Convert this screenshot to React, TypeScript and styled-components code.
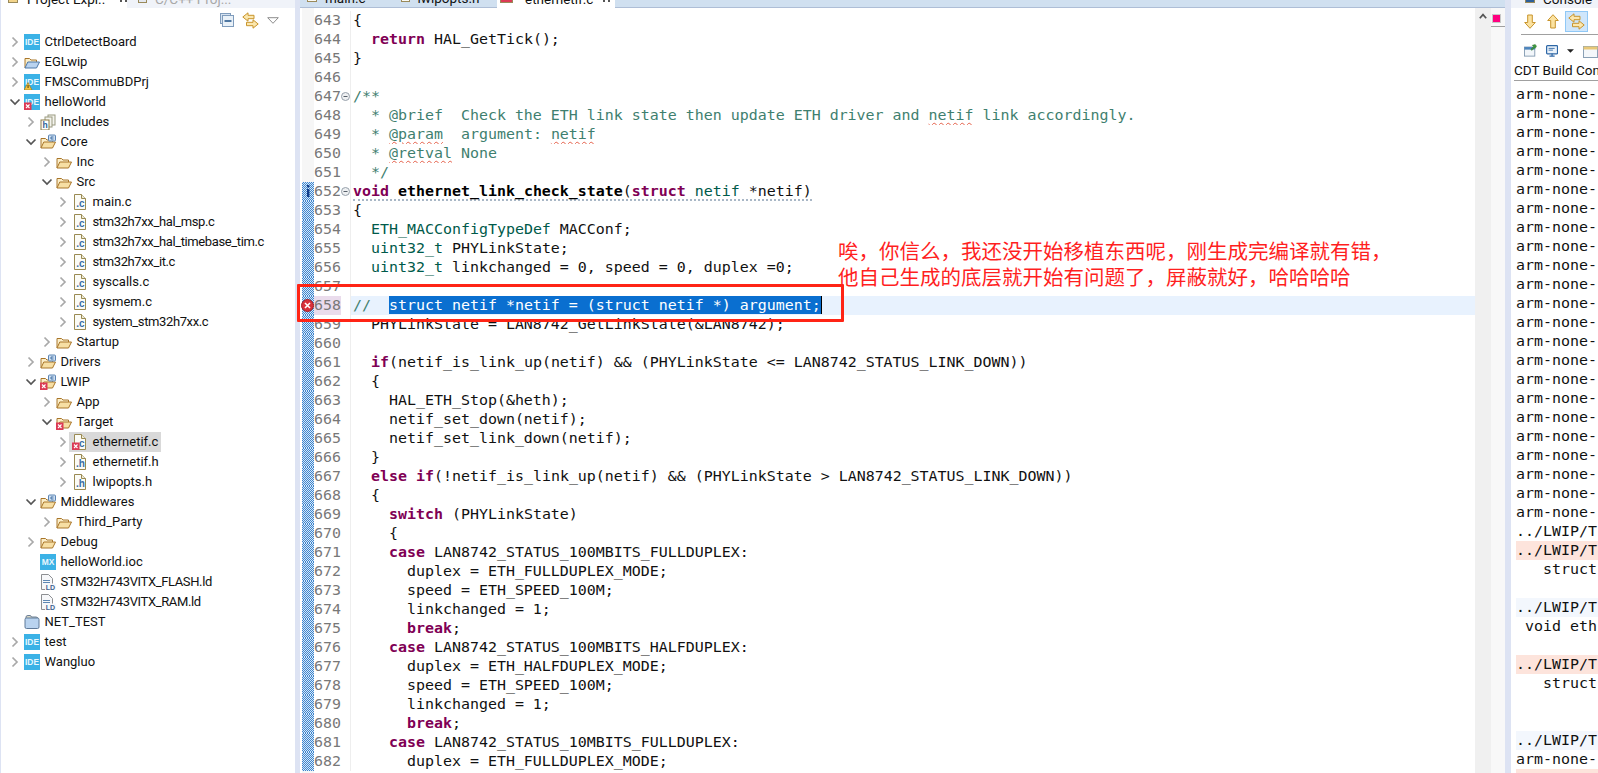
import React from "react";
import styled, { createGlobalStyle, css } from "styled-components";

const UI_FONT = `Roboto, "Noto Sans", sans-serif`;
const MONO_FONT = `"DejaVu Sans Mono", "Liberation Mono", monospace`;
const SASH = "#dde3f3";

const GlobalStyle = createGlobalStyle`
  html, body {
    margin: 0;
    padding: 0;
    width: 100%;
    height: 100%;
    overflow: hidden;
    background: #fff;
  }
  #root {
    height: 100%;
  }
`;

const Root = styled.div`
  position: relative;
  display: flex;
  width: 1598px;
  height: 773px;
  overflow: hidden;
  background: #fff;
`;

const Sash = styled.div<{ $w: number }>`
  flex: 0 0 ${(p) => p.$w}px;
  background: ${SASH};
`;

/* ---------- tab strips ---------- */

const TabStrip = styled.div<{ $bg: string }>`
  flex: 0 0 8px;
  height: 8px;
  display: flex;
  overflow: hidden;
  background: ${(p) => p.$bg};
`;

const Tab = styled.div<{ $w: number; $bg?: string; $pad?: number; $gap?: number; $line?: boolean }>`
  flex: 0 0 ${(p) => p.$w}px;
  height: 8px;
  box-sizing: border-box;
  display: flex;
  align-items: flex-end;
  gap: ${(p) => p.$gap ?? 8}px;
  padding-left: ${(p) => p.$pad ?? 7}px;
  overflow: hidden;
  background: ${(p) => p.$bg ?? "transparent"};
  ${(p) => p.$line && "border-bottom: 1px solid #aebed6;"}
`;

const TabText = styled.span<{ $dim?: boolean }>`
  font: 13.5px/14px ${UI_FONT};
  color: ${(p) => (p.$dim ? "#a8a8a8" : "#111")};
  white-space: nowrap;
  margin-bottom: 2px;
  flex: none;
`;

const TabGlyph = styled.span<{ $tone: string; $w: number; $push?: number }>`
  flex: none;
  width: ${(p) => p.$w}px;
  height: 3px;
  margin-bottom: 5px;
  margin-left: ${(p) => p.$push ?? 0}px;
  box-sizing: border-box;
  background: ${(p) => p.$tone};
  border: 1px solid #9a8a5a;
  border-top: none;
`;

const CloseMark = styled.span<{ $push: number }>`
  flex: none;
  width: 8px;
  height: 2px;
  margin: 0 0 6px ${(p) => p.$push}px;
  background: repeating-linear-gradient(90deg, #555 0 2px, transparent 2px 5px);
`;

/* ---------- project explorer ---------- */

const Explorer = styled.aside`
  flex: 0 0 295px;
  display: flex;
  flex-direction: column;
  box-sizing: border-box;
  border-left: 1px solid ${SASH};
`;

const ExplorerBar = styled.div`
  flex: 0 0 24px;
  display: flex;
  align-items: center;
  padding-left: 219px;
  gap: 8px;
`;

const Tree = styled.ul`
  list-style: none;
  margin: 0;
  padding: 0;
`;

const TreeRow = styled.li<{ $depth: number }>`
  height: 20px;
  display: flex;
  align-items: center;
  padding-left: ${(p) => 5.5 + p.$depth * 16}px;
`;

const ChevronSlot = styled.span`
  flex: 0 0 16px;
  height: 16px;
  display: flex;
  align-items: center;
  justify-content: center;
`;

const IconSlot = styled.span<{ $selected?: boolean }>`
  flex: 0 0 17px;
  height: 20px;
  padding-left: 1px;
  box-sizing: border-box;
  display: flex;
  align-items: center;
  ${(p) => p.$selected && "background: #d9d9d9; box-shadow: -2px 0 0 #d9d9d9;"}
`;

const TreeLabel = styled.span<{ $selected?: boolean; $tight?: boolean }>`
  padding: 0 4px 0 5px;
  font: 13px/20px ${UI_FONT};
  color: #111;
  white-space: nowrap;
  ${(p) => p.$tight && "letter-spacing: -0.38px;"}
  ${(p) => p.$selected && "background: #d9d9d9; padding-right: 3px;"}
`;

/* ---------- editor ---------- */

const Editor = styled.main`
  flex: 1 1 0;
  min-width: 0;
  display: flex;
  flex-direction: column;
`;

const EditorBody = styled.div`
  flex: 1 1 0;
  min-height: 0;
  display: flex;
`;

const Lines = styled.div`
  flex: 1 1 0;
  min-width: 0;
  padding: 3px 0 0 2px;
  overflow: hidden;
  background: linear-gradient(#f6f6f6, #f6f6f6) 2px 0 / 12px 100% no-repeat;
`;

const LineRow = styled.div`
  height: 19px;
  display: grid;
  grid-template-columns: 12px 27px 10px 1fr;
  font: 14.95px/19px ${MONO_FONT};
`;

const Marker = styled.div<{ $changed?: boolean }>`
  position: relative;
  height: 19px;
  ${(p) =>
    p.$changed &&
    css`
      background: repeating-conic-gradient(#3d86cc 0 25%, #d8e8fa 0 50%) 0 0 / 2px 2px;
    `}
`;

const LineNo = styled.div<{ $error?: boolean }>`
  color: #787878;
  text-align: right;
  padding-right: 1px;
  background: ${(p) => (p.$error ? "#eadcec" : "#fff")};
`;

const Fold = styled.div`
  display: flex;
  align-items: center;
  background: #fff;
`;

const Code = styled.div<{ $current?: boolean }>`
  padding-left: 2px;
  margin-left: -1px;
  border-left: 1px solid #eeeeee;
  white-space: pre;
  overflow: hidden;
  color: #111;
  background: ${(p) => (p.$current ? "#e8f2fe" : "transparent")};
`;

type TokenKind = "kw" | "cm" | "type" | "fn" | "sel";

const Token = styled.span<{ $kind?: TokenKind; $wavy?: boolean }>`
  ${(p) => p.$kind === "kw" && "color: #7f0055; font-weight: 700;"}
  ${(p) => p.$kind === "cm" && "color: #3f7f6f;"}
  ${(p) => p.$kind === "type" && "color: #005a4a;"}
  ${(p) => p.$kind === "fn" && "color: #000; font-weight: 700;"}
  ${(p) => p.$kind === "sel" && "color: #fff; background: #0a6fd0; box-shadow: 1px 0 0 #000;"}
  ${(p) =>
    p.$wavy &&
    css`
      text-decoration: underline wavy #e5604a 1px;
      text-underline-offset: 2px;
    `}
`;

const InfoLine = styled.span`
  display: inline-block;
  height: 19px;
  border-bottom: 2px dotted #a9b7c6;
  box-sizing: border-box;
`;

const Scrollbar = styled.div`
  flex: 0 0 16px;
  background: #f0f0f0;
  display: flex;
  justify-content: center;
  padding-top: 5px;
  box-sizing: border-box;
`;

const Overview = styled.div`
  flex: 0 0 14px;
  background: #f8f8f8;
  box-sizing: border-box;
  padding: 7px 0 0 2px;
`;

const OverviewMark = styled.div`
  width: 7px;
  height: 7px;
  background: #ff0080;
  box-shadow: 0 0 0 1px #c8c8c8;
  margin-bottom: 4px;
`;

const OverviewRule = styled.div`
  height: 1px;
  margin-left: -2px;
  background: #a0a0a0;
`;

/* ---------- annotations lying over the editor ---------- */

const RedBox = styled.div`
  position: absolute;
  left: 297px;
  top: 284px;
  width: 547px;
  height: 38px;
  box-sizing: border-box;
  border: 3px solid #ff2415;
  border-radius: 1px;
`;

const Note = styled.div`
  position: absolute;
  left: 838px;
  top: 237px;
  font: 20.5px/26px "Noto Sans CJK SC", sans-serif;
  color: #ff1f1f;
  white-space: nowrap;
`;

/* ---------- console ---------- */

const ConsolePane = styled.aside`
  flex: 0 0 87px;
  min-width: 0;
  display: flex;
  flex-direction: column;
  overflow: hidden;
`;

const ConsoleBar = styled.div`
  flex: 0 0 27px;
  box-sizing: border-box;
  margin-left: 10px;
  border-bottom: 1px solid #a0a0a0;
  display: flex;
  align-items: center;
  padding-left: 3px;
  gap: 11px;
`;

const HotButton = styled.div`
  flex: 0 0 23px;
  height: 21px;
  margin-left: -5px;
  box-sizing: border-box;
  background: #cfe6fb;
  border: 1px solid #90c8f6;
  display: flex;
  align-items: center;
  justify-content: center;
`;

const ConsoleTools = styled.div`
  flex: 0 0 27px;
  box-sizing: border-box;
  display: flex;
  align-items: center;
  padding: 4px 0 0 13px;
  gap: 9px;
  overflow: hidden;
`;

const ConsoleTitle = styled.div`
  flex: 0 0 18px;
  box-sizing: content-box;
  margin-left: 3px;
  font: 13.5px/17px ${UI_FONT};
  color: #111;
  white-space: nowrap;
  border-bottom: 1px solid #a0a0a0;
`;

const ConsoleOut = styled.div`
  padding: 4px 0 0 5px;
`;

const ConsoleLine = styled.div<{ $tone?: "err" | "info" }>`
  height: 19px;
  font: 14.95px/19px ${MONO_FONT};
  color: #111;
  white-space: pre;
  background: ${(p) => (p.$tone === "err" ? "#fde4dc" : p.$tone === "info" ? "#f3f7fd" : "transparent")};
`;

/* ---------- icons ---------- */

const ICON_TEXT = "Liberation Sans, sans-serif";

const Chevron = ({ open }: { open?: boolean }) => (
  <svg width="12" height="12" viewBox="0 0 12 12" fill="none">
    {open ? (
      <polyline points="1.5,3.5 6,8 10.5,3.5" stroke="#555" strokeWidth="1.7" />
    ) : (
      <polyline points="3.5,1.5 8,6 3.5,10.5" stroke="#a9a9a9" strokeWidth="1.7" />
    )}
  </svg>
);

type BadgeKind = "error" | "warn";

const Badge = ({ kind }: { kind?: BadgeKind }) => {
  if (kind === "error")
    return (
      <g>
        <rect x="0" y="8.5" width="7.5" height="7.5" fill="#dc3a55" />
        <path d="M2 10.5 L5.5 14 M5.5 10.5 L2 14" stroke="#fff" strokeWidth="1.1" />
      </g>
    );
  if (kind === "warn")
    return (
      <g>
        <polygon points="4,8.5 8,16 0,16" fill="#f4c542" stroke="#8f6d10" strokeWidth="0.6" />
        <rect x="3.6" y="11" width="0.9" height="3" fill="#3a2c00" />
      </g>
    );
  return null;
};

const BrandIcon = ({ label, badge }: { label: string; badge?: BadgeKind }) => (
  <svg width="16" height="16" viewBox="0 0 16 16">
    <rect width="16" height="16" fill="#3bb2e6" />
    <text x="8" y="11.2" textAnchor="middle" fontFamily={ICON_TEXT} fontWeight="700" fontSize="8.4" fill="#e9f7fd">
      {label}
    </text>
    <Badge kind={badge} />
  </svg>
);

const FolderIcon = ({ src, badge, front = "#f7dfa4" }: { src?: boolean; badge?: BadgeKind; front?: string }) => (
  <svg width="16" height="16" viewBox="0 0 16 16">
    <path d="M1 14 V4.5 H5.5 L7 6 H12.5 V8" fill="#fbeec9" stroke="#a9762a" />
    <path d="M1 14 L3.8 8 H15.5 L12.5 14 Z" fill={front} stroke="#a9762a" />
    {src && (
      <g>
        <rect x="8.5" y="1" width="7" height="6" rx="1" fill="#cfe0f2" stroke="#5b84b3" />
        <path d="M13.5 3 H11 V5 H13.5" fill="none" stroke="#3f6ea3" />
      </g>
    )}
    <Badge kind={badge} />
  </svg>
);

const ProjectFolderIcon = () => (
  <svg width="16" height="16" viewBox="0 0 16 16">
    <path d="M2 5 V3 Q2 1.5 4 1.5 H6 Q7 1.5 7.5 3 H12 Q14 3 14 5" fill="#d8d8c8" stroke="#6d7f95" />
    <rect x="1" y="4" width="14" height="10.5" rx="1.5" fill="#b9d3ef" stroke="#5f7a99" />
  </svg>
);

const ArchiveOpenIcon = () => (
  <svg width="16" height="16" viewBox="0 0 16 16">
    <path d="M1 14 V4.5 H5.5 L7 6 H12.5 V8" fill="#fbeec9" stroke="#a9762a" />
    <path d="M1 14 L3.8 8 H15.5 L12.5 14 Z" fill="#b9d3ef" stroke="#4d78a8" />
  </svg>
);

const IncludesIcon = () => (
  <svg width="16" height="16" viewBox="0 0 16 16">
    <rect x="8" y="1" width="7" height="10" fill="#f4f4ee" stroke="#9a9a80" />
    <rect x="5" y="3" width="7" height="10" fill="#f4f4ee" stroke="#9a9a80" />
    <rect x="1" y="6" width="8" height="10" fill="#fff" stroke="#8a7a45" />
    <text x="5" y="14.4" textAnchor="middle" fontFamily={ICON_TEXT} fontWeight="700" fontSize="8.5" fill="#2f5f94">
      h
    </text>
  </svg>
);

const FileIcon = ({ letter, badge }: { letter: string; badge?: BadgeKind }) => (
  <svg width="16" height="16" viewBox="0 0 16 16">
    <path d="M2.5 .5 H9.5 L13.5 4.5 V15.5 H2.5 Z" fill="#fbfbf6" stroke="#9a8a52" />
    <path d="M9.5 .5 V4.5 H13.5" fill="#ecead8" stroke="#9a8a52" />
    <text x="8.4" y="13.2" textAnchor="middle" fontFamily={ICON_TEXT} fontWeight="700" fontSize="10" fill="#3a6ea5">
      {letter}
    </text>
    <Badge kind={badge} />
  </svg>
);

const LdIcon = () => (
  <svg width="16" height="16" viewBox="0 0 16 16">
    <path d="M1.5 .5 H8.5 L12.5 4.5 V15.5 H1.5 Z" fill="#f7f8fa" stroke="#8d8f92" />
    <path d="M3 6.5 H10 M3 8.5 H10" stroke="#5e87b3" />
    <rect x="5" y="9.5" width="11" height="6.5" fill="#f7f8fa" />
    <text x="10.5" y="15.6" textAnchor="middle" fontFamily={ICON_TEXT} fontWeight="700" fontSize="7" fill="#3f6390">
      LD
    </text>
  </svg>
);

const CollapseIcon = () => (
  <svg width="14" height="14" viewBox="0 0 14 14">
    <rect x=".5" y=".5" width="10" height="10" fill="#d5e2f0" stroke="#7f9cbc" />
    <rect x="2.5" y="2.5" width="11" height="11" fill="#e9f1f8" stroke="#7f9cbc" />
    <path d="M4.5 8 H11.5" stroke="#26588c" strokeWidth="1.6" />
  </svg>
);

const LinkIcon = () => (
  <svg width="17" height="17" viewBox="0 0 17 17">
    <path d="M.8 5 L6 .8 V3.3 H12 V6.7 H6 V9.2 Z" fill="#fbe7ae" stroke="#c8942c" />
    <path d="M16.2 12 L11 7.8 V10.3 H4.5 V13.7 H11 V16.2 Z" fill="#fbe7ae" stroke="#c8942c" />
  </svg>
);

const ViewMenuIcon = () => (
  <svg width="12" height="7" viewBox="0 0 12 7">
    <polygon points=".7,.7 11.3,.7 6,6.3" fill="#fff" stroke="#8d8d8d" />
  </svg>
);

const ScrollArrow = ({ up }: { up?: boolean }) => (
  <svg width="12" height="15" viewBox="0 0 12 15">
    <path
      d={up ? "M6 .7 L11.3 6.5 H8.3 V14 H3.7 V6.5 H.7 Z" : "M6 14.3 L11.3 8.5 H8.3 V1 H3.7 V8.5 H.7 Z"}
      fill="#fbe2a0"
      stroke="#c8942c"
    />
  </svg>
);

const PinWindowIcon = () => (
  <svg width="15" height="15" viewBox="0 0 15 15">
    <rect x=".5" y="3.5" width="12" height="10.5" fill="#f2f6fa" stroke="#7d95ad" />
    <rect x=".5" y="3.5" width="12" height="3" fill="#4d85bd" />
    <path d="M8 6 L11 3 L9.5 1.5 L13 .5 L14.5 2.5 L13 5 L11.5 4.5 L9 7.5 Z" fill="#3f9a3f" stroke="#2c6e2c" strokeWidth=".5" />
  </svg>
);

const MonitorIcon = () => (
  <svg width="14" height="14" viewBox="0 0 14 14">
    <rect x=".7" y=".7" width="12.6" height="9.6" rx="1" fill="#eaf2fa" stroke="#2e67a6" strokeWidth="1.4" />
    <path d="M3 4 H10 M3 6 H8" stroke="#2e67a6" />
    <path d="M4 13 H10 M7 10 V13" stroke="#2e67a6" strokeWidth="1.4" />
  </svg>
);

const DropTriangle = () => (
  <svg width="8" height="4" viewBox="0 0 8 4">
    <polygon points="0,0 8,0 4,4" fill="#222" />
  </svg>
);

const WindowIcon = styled.svg`
  flex: none;
`;

const FoldMark = () => (
  <svg width="9" height="9" viewBox="0 0 9 9" fill="none">
    <circle cx="4.5" cy="4.5" r="4" fill="#eef0f2" stroke="#96a0aa" />
    <path d="M2.5 4.5 H6.5" stroke="#56606a" />
  </svg>
);

const ErrorMark = styled.svg`
  position: absolute;
  left: -1px;
  top: 3px;
`;

const InfoMark = styled.svg`
  position: absolute;
  left: 2px;
  top: 2px;
`;

const ScrollUp = () => (
  <svg width="8" height="6" viewBox="0 0 8 6" fill="none">
    <polyline points=".8,5.2 4,1.6 7.2,5.2" stroke="#555" strokeWidth="1.7" />
  </svg>
);

/* ---------- data ---------- */

type Node = {
  depth: number;
  name: string;
  icon: React.ReactNode;
  chevron?: "open" | "closed";
  selected?: boolean;
};

const tree: Node[] = [
  { depth: 0, name: "CtrlDetectBoard", chevron: "closed", icon: <BrandIcon label="IDE" /> },
  { depth: 0, name: "EGLwip", chevron: "closed", icon: <ArchiveOpenIcon /> },
  { depth: 0, name: "FMSCommuBDPrj", chevron: "closed", icon: <BrandIcon label="IDE" badge="warn" /> },
  { depth: 0, name: "helloWorld", chevron: "open", icon: <BrandIcon label="IDE" badge="error" /> },
  { depth: 1, name: "Includes", chevron: "closed", icon: <IncludesIcon /> },
  { depth: 1, name: "Core", chevron: "open", icon: <FolderIcon src /> },
  { depth: 2, name: "Inc", chevron: "closed", icon: <FolderIcon /> },
  { depth: 2, name: "Src", chevron: "open", icon: <FolderIcon /> },
  { depth: 3, name: "main.c", chevron: "closed", icon: <FileIcon letter=".c" /> },
  { depth: 3, name: "stm32h7xx_hal_msp.c", chevron: "closed", icon: <FileIcon letter=".c" /> },
  { depth: 3, name: "stm32h7xx_hal_timebase_tim.c", chevron: "closed", icon: <FileIcon letter=".c" /> },
  { depth: 3, name: "stm32h7xx_it.c", chevron: "closed", icon: <FileIcon letter=".c" /> },
  { depth: 3, name: "syscalls.c", chevron: "closed", icon: <FileIcon letter=".c" /> },
  { depth: 3, name: "sysmem.c", chevron: "closed", icon: <FileIcon letter=".c" /> },
  { depth: 3, name: "system_stm32h7xx.c", chevron: "closed", icon: <FileIcon letter=".c" /> },
  { depth: 2, name: "Startup", chevron: "closed", icon: <FolderIcon /> },
  { depth: 1, name: "Drivers", chevron: "closed", icon: <FolderIcon src /> },
  { depth: 1, name: "LWIP", chevron: "open", icon: <FolderIcon src badge="error" /> },
  { depth: 2, name: "App", chevron: "closed", icon: <FolderIcon /> },
  { depth: 2, name: "Target", chevron: "open", icon: <FolderIcon badge="error" /> },
  { depth: 3, name: "ethernetif.c", chevron: "closed", selected: true, icon: <FileIcon letter=".c" badge="error" /> },
  { depth: 3, name: "ethernetif.h", chevron: "closed", icon: <FileIcon letter=".h" /> },
  { depth: 3, name: "lwipopts.h", chevron: "closed", icon: <FileIcon letter=".h" /> },
  { depth: 1, name: "Middlewares", chevron: "open", icon: <FolderIcon src /> },
  { depth: 2, name: "Third_Party", chevron: "closed", icon: <FolderIcon /> },
  { depth: 1, name: "Debug", chevron: "closed", icon: <FolderIcon /> },
  { depth: 1, name: "helloWorld.ioc", icon: <BrandIcon label="MX" /> },
  { depth: 1, name: "STM32H743VITX_FLASH.ld", icon: <LdIcon /> },
  { depth: 1, name: "STM32H743VITX_RAM.ld", icon: <LdIcon /> },
  { depth: 0, name: "NET_TEST", icon: <ProjectFolderIcon /> },
  { depth: 0, name: "test", chevron: "closed", icon: <BrandIcon label="IDE" /> },
  { depth: 0, name: "Wangluo", chevron: "closed", icon: <BrandIcon label="IDE" /> },
];

type Seg = string | { t: string; k?: TokenKind; w?: boolean };

const kw = (t: string): Seg => ({ t, k: "kw" });
const cm = (t: string): Seg => ({ t, k: "cm" });
const ty = (t: string): Seg => ({ t, k: "type" });

const code: Seg[][] = [
  ["{"],
  ["  ", kw("return"), " HAL_GetTick();"],
  ["}"],
  [],
  [cm("/**")],
  [cm("  * @brief  Check the ETH link state then update ETH driver and "), { t: "netif", k: "cm", w: true }, cm(" link accordingly.")],
  [cm("  * "), { t: "@param", k: "cm", w: true }, cm("  argument: "), { t: "netif", k: "cm", w: true }],
  [cm("  * "), { t: "@retval", k: "cm", w: true }, cm(" None")],
  [cm("  */")],
  [kw("void"), " ", { t: "ethernet_link_check_state", k: "fn" }, "(", kw("struct"), " ", ty("netif"), " *netif)"],
  ["{"],
  ["  ", ty("ETH_MACConfigTypeDef"), " MACConf;"],
  ["  ", ty("uint32_t"), " PHYLinkState;"],
  ["  ", ty("uint32_t"), " linkchanged = 0, speed = 0, duplex =0;"],
  [],
  [cm("//  "), { t: "struct netif *netif = (struct netif *) argument;", k: "sel" }],
  ["  PHYLinkState = LAN8742_GetLinkState(&LAN8742);"],
  [],
  ["  ", kw("if"), "(netif_is_link_up(netif) && (PHYLinkState <= LAN8742_STATUS_LINK_DOWN))"],
  ["  {"],
  ["    HAL_ETH_Stop(&heth);"],
  ["    netif_set_down(netif);"],
  ["    netif_set_link_down(netif);"],
  ["  }"],
  ["  ", kw("else"), " ", kw("if"), "(!netif_is_link_up(netif) && (PHYLinkState > LAN8742_STATUS_LINK_DOWN))"],
  ["  {"],
  ["    ", kw("switch"), " (PHYLinkState)"],
  ["    {"],
  ["    ", kw("case"), " LAN8742_STATUS_100MBITS_FULLDUPLEX:"],
  ["      duplex = ETH_FULLDUPLEX_MODE;"],
  ["      speed = ETH_SPEED_100M;"],
  ["      linkchanged = 1;"],
  ["      ", kw("break"), ";"],
  ["    ", kw("case"), " LAN8742_STATUS_100MBITS_HALFDUPLEX:"],
  ["      duplex = ETH_HALFDUPLEX_MODE;"],
  ["      speed = ETH_SPEED_100M;"],
  ["      linkchanged = 1;"],
  ["      ", kw("break"), ";"],
  ["    ", kw("case"), " LAN8742_STATUS_10MBITS_FULLDUPLEX:"],
  ["      duplex = ETH_FULLDUPLEX_MODE;"],
];

const FIRST_LINE = 643;

const ARM = "arm-none-";
const WARN = "../LWIP/T";

const consoleLines: { text: string; tone?: "err" | "info" }[] = [
  ...Array.from({ length: 23 }, () => ({ text: ARM })),
  { text: WARN },
  { text: WARN, tone: "err" as const },
  { text: "   struct" },
  { text: " " },
  { text: WARN, tone: "info" as const },
  { text: " void eth" },
  { text: " " },
  { text: WARN, tone: "err" as const },
  { text: "   struct" },
  { text: " " },
  { text: " " },
  { text: WARN, tone: "info" as const },
  { text: ARM },
  { text: " ", tone: "err" as const },
];

const renderSeg = (seg: Seg, i: number) =>
  typeof seg === "string" ? (
    <span key={i}>{seg}</span>
  ) : (
    <Token key={i} $kind={seg.k} $wavy={seg.w}>
      {seg.t}
    </Token>
  );

const CodeLine = ({ num, segs }: { num: number; segs: Seg[] }) => {
  const hasError = num === 658;
  const hasInfo = num === 652;
  return (
    <LineRow>
      <Marker $changed={num >= 652}>
        {hasInfo && (
          <InfoMark width="8" height="14" viewBox="0 0 8 14">
            <rect x="3" y="1" width="2.4" height="2.4" fill="#123f8a" />
            <rect x="3" y="5" width="2.4" height="8" fill="#123f8a" />
          </InfoMark>
        )}
        {hasError && (
          <ErrorMark width="13" height="13" viewBox="0 0 13 13">
            <circle cx="6.5" cy="6.5" r="6" fill="#d8313a" stroke="#a51e28" />
            <path d="M4 4 L9 9 M9 4 L4 9" stroke="#fff" strokeWidth="1.6" />
          </ErrorMark>
        )}
      </Marker>
      <LineNo $error={hasError}>{num}</LineNo>
      <Fold>{(num === 647 || num === 652) && <FoldMark />}</Fold>
      <Code $current={hasError}>
        {hasInfo ? <InfoLine>{segs.map(renderSeg)}</InfoLine> : segs.map(renderSeg)}
      </Code>
    </LineRow>
  );
};

const App = () => (
  <Root>
    <GlobalStyle />

    <Explorer>
      <TabStrip $bg="#f0f3f9">
        <Tab $w={126} $bg="#fff" $gap={9}>
          <TabGlyph $tone="#f3d48a" $w={10} />
          <TabText>Project Expl..</TabText>
          <CloseMark $push={6} />
        </Tab>
        <Tab $w={168} $pad={11}>
          <TabGlyph $tone="#e4e8f0" $w={9} />
          <TabText $dim>C/C++ Proj...</TabText>
        </Tab>
      </TabStrip>
      <ExplorerBar>
        <CollapseIcon />
        <LinkIcon />
        <ViewMenuIcon />
      </ExplorerBar>
      <Tree>
        {tree.map((n) => (
          <TreeRow key={n.name + n.depth} $depth={n.depth}>
            <ChevronSlot>{n.chevron && <Chevron open={n.chevron === "open"} />}</ChevronSlot>
            <IconSlot $selected={n.selected}>{n.icon}</IconSlot>
            <TreeLabel $selected={n.selected} $tight={/\d/.test(n.name)}>
              {n.name}
            </TreeLabel>
          </TreeRow>
        ))}
      </Tree>
    </Explorer>

    <Sash $w={5} />

    <Editor>
      <TabStrip $bg="#d0e0f0">
        <Tab $w={197} $line>
          <TabGlyph $tone="#fbfbf6" $w={10} />
          <TabText>main.c</TabText>
          <TabGlyph $tone="#fbfbf6" $w={9} $push={27} />
          <TabText>lwipopts.h</TabText>
        </Tab>
        <Tab $w={118} $bg="#fff" $pad={3} $gap={12}>
          <TabGlyph $tone="#dc3a55" $w={13} />
          <TabText>ethernetif.c</TabText>
          <CloseMark $push={-2} />
        </Tab>
        <Tab $w={890} $line />
      </TabStrip>
      <EditorBody>
        <Lines>
          {code.map((segs, i) => (
            <CodeLine key={i} num={FIRST_LINE + i} segs={segs} />
          ))}
        </Lines>
        <Scrollbar>
          <ScrollUp />
        </Scrollbar>
        <Overview>
          <OverviewMark />
          <OverviewRule />
        </Overview>
      </EditorBody>
    </Editor>

    <Sash $w={6} />

    <ConsolePane>
      <TabStrip $bg="#f0f3f9">
        <Tab $w={87} $pad={14}>
          <TabGlyph $tone="#2c5f9a" $w={10} />
          <TabText>Console</TabText>
        </Tab>
      </TabStrip>
      <ConsoleBar>
        <ScrollArrow />
        <ScrollArrow up />
        <HotButton>
          <LinkIcon />
        </HotButton>
      </ConsoleBar>
      <ConsoleTools>
        <PinWindowIcon />
        <MonitorIcon />
        <DropTriangle />
        <WindowIcon width="15" height="14" viewBox="0 0 15 14">
          <rect x=".5" y="2.5" width="14" height="11" fill="#f4f7fa" stroke="#8aa0b5" />
          <rect x=".5" y="2.5" width="14" height="3" fill="#e8c877" />
        </WindowIcon>
      </ConsoleTools>
      <ConsoleTitle>CDT Build Con</ConsoleTitle>
      <ConsoleOut>
        {consoleLines.map((l, i) => (
          <ConsoleLine key={i} $tone={l.tone}>
            {l.text}
          </ConsoleLine>
        ))}
      </ConsoleOut>
    </ConsolePane>

    <RedBox />
    <Note>
      唉，你信么，我还没开始移植东西呢，刚生成完编译就有错，
      <br />
      他自己生成的底层就开始有问题了，屏蔽就好，哈哈哈哈
    </Note>
  </Root>
);

export default App;
